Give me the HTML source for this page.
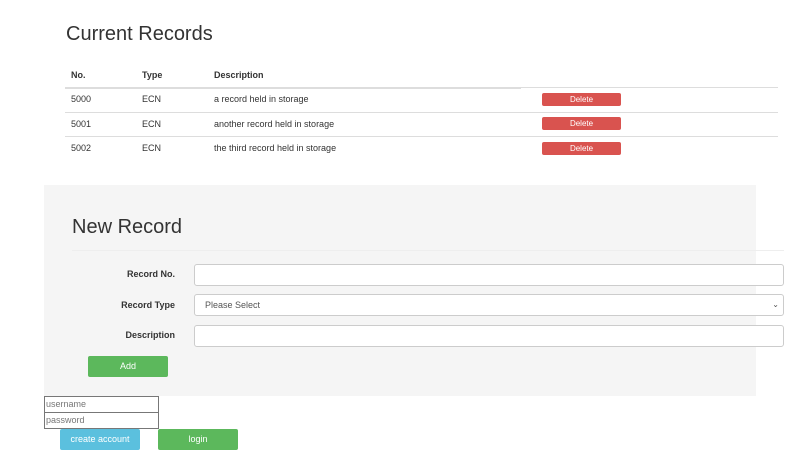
<!DOCTYPE html>
<html><head><style>
body{margin:0;width:800px;height:450px;overflow:hidden;background:#fff;font-family:"Liberation Sans",sans-serif;color:#333;position:relative}
.a{position:absolute}
.t{font-size:9px}
.b{font-weight:bold}
.line{position:absolute;height:1px;background:#ddd}
.del{position:absolute;left:542px;width:79px;height:13px;background:#d9534f;border-radius:2px;color:#fff;font-size:8px;text-align:center;line-height:13px}
.inp{position:absolute;left:194px;width:588px;height:20px;border:1px solid #ccc;border-radius:3px;background:#fff}
.lbl{position:absolute;width:175px;text-align:right;font-size:9px;font-weight:bold}
.btn{position:absolute;height:21px;border-radius:2px;color:#fff;font-size:9px;text-align:center;line-height:21px}
.sm{position:absolute;left:44px;width:112px;height:15px;border:1px solid #777;font-size:9px;color:#777;line-height:15px;padding-left:1px;background:#fff;box-sizing:content-box}
</style></head><body>
<div class="a" style="left:66px;top:23px;font-size:20px">Current Records</div>
<div class="a t b" style="left:71px;top:70px">No.</div>
<div class="a t b" style="left:142px;top:70px">Type</div>
<div class="a t b" style="left:214px;top:70px">Description</div>
<div class="line" style="left:65px;top:87px;width:456px;height:2px"></div>
<div class="line" style="left:521px;top:87px;width:257px"></div>
<div class="a t" style="left:71px;top:94px">5000</div><div class="a t" style="left:142px;top:94px">ECN</div><div class="a t" style="left:214px;top:94px">a record held in storage</div>
<div class="del" style="top:93px">Delete</div>
<div class="line" style="left:65px;top:112px;width:713px"></div>
<div class="a t" style="left:71px;top:119px">5001</div><div class="a t" style="left:142px;top:119px">ECN</div><div class="a t" style="left:214px;top:119px">another record held in storage</div>
<div class="del" style="top:117px">Delete</div>
<div class="line" style="left:65px;top:136px;width:713px"></div>
<div class="a t" style="left:71px;top:143px">5002</div><div class="a t" style="left:142px;top:143px">ECN</div><div class="a t" style="left:214px;top:143px">the third record held in storage</div>
<div class="del" style="top:142px">Delete</div>

<div class="a" style="left:44px;top:185px;width:712px;height:211px;background:#f5f5f5"></div>
<div class="a" style="left:72px;top:216px;font-size:20px">New Record</div>
<div class="line" style="left:72px;top:250px;width:712px;background:#eee"></div>
<div class="lbl" style="top:269px">Record No.</div>
<div class="inp" style="top:264px"></div>
<div class="lbl" style="top:300px">Record Type</div>
<div class="inp" style="top:294px;font-size:9px;line-height:20px;color:#555"><span style="margin-left:10px">Please Select</span><span style="position:absolute;right:4px;font-size:8px">&#8964;</span></div>
<div class="lbl" style="top:330px">Description</div>
<div class="inp" style="top:325px"></div>
<div class="btn" style="left:88px;top:356px;width:80px;background:#5cb85c">Add</div>

<div class="sm" style="top:396px">username</div>
<div class="sm" style="top:412px">password</div>
<div class="btn" style="left:60px;top:429px;width:80px;background:#5bc0de">create account</div>
<div class="btn" style="left:158px;top:429px;width:80px;background:#5cb85c">login</div>
</body></html>
